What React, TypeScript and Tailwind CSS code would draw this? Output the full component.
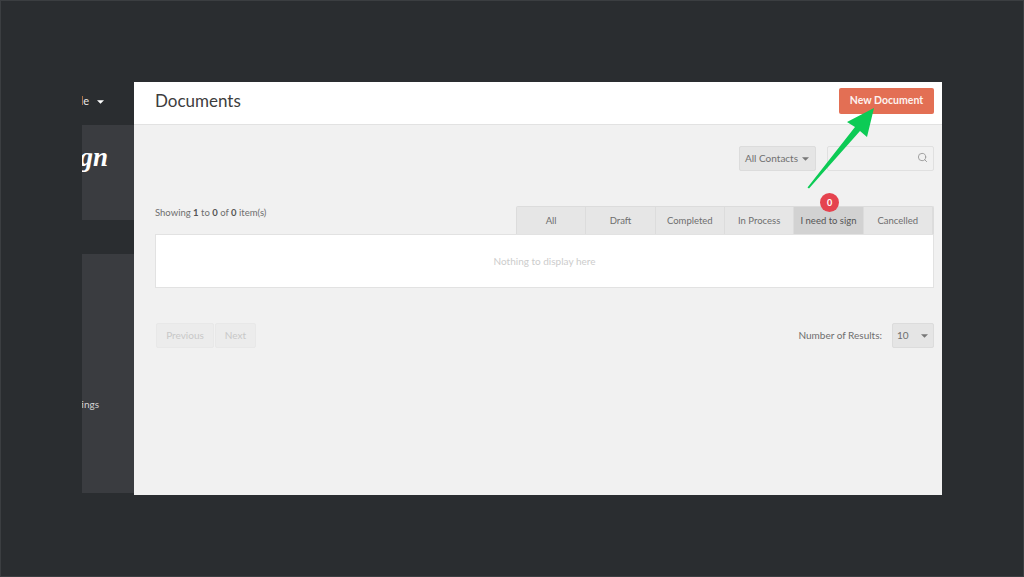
import { Search } from "lucide-react";

const tabs = ["All", "Draft", "Completed", "In Process", "I need to sign", "Cancelled"];

function Caret({ className }: { className: string }) {
  return (
    <svg width="7" height="4" viewBox="0 0 8 4" className={className}>
      <path d="M0 0h8L4 4z" fill="currentColor" />
    </svg>
  );
}

function Sidebar() {
  return (
    <aside className="w-[52px] h-[411px] shrink-0 overflow-hidden flex flex-col text-white">
      <div className="h-[43px] pb-[4px] flex items-center justify-end pr-[30px] text-[11px]">
        <span className="shrink-0 whitespace-nowrap text-[#e8e8e8]">Profile</span>
        <Caret className="ml-[8px] shrink-0 text-white" />
      </div>
      <div className="h-[95px] bg-[#3a3c40] flex justify-end pr-[26px] pt-[15px]">
        <span className="shrink-0 text-[27px] leading-[34px] font-bold italic font-['Liberation_Serif',serif]">
          Sign
        </span>
      </div>
      <div className="h-[34px]" />
      <div className="h-[239px] bg-[#3a3c40] flex justify-end pr-[35px] pt-[143px]">
        <span className="shrink-0 text-[10px] leading-[14px] text-[#d4d4d4]">Settings</span>
      </div>
    </aside>
  );
}

function Tabs() {
  return (
    <div className="relative w-[418px] h-[28px] flex bg-[#e6e6e6] border border-b-0 border-[#dcdcdc] rounded-t-[2px]">
      {tabs.map(tab => (
        <div
          key={tab}
          className={`flex-1 flex items-center justify-center pt-px text-[9.5px] border-r border-[#dcdcdc] last:border-r-0 whitespace-nowrap ${
            tab === "I need to sign" ? "bg-[#d2d2d2] text-[#555]" : "text-[#6e6e6e]"
          }`}
        >
          {tab}
        </div>
      ))}
      <span className="absolute left-[303px] top-[-14px] w-[19px] h-[19px] rounded-full bg-[#e5434f] text-white text-[9px] font-bold flex items-center justify-center">
        0
      </span>
    </div>
  );
}

export default function App() {
  return (
    <div className="relative w-[1024px] h-[577px] overflow-hidden bg-[#2a2d30] border border-[#3b3e41] pt-[81px] pl-[81px] font-['Lato',sans-serif]">
      <div className="flex">
        <Sidebar />
        <main className="w-[808px] h-[413px] bg-[#f1f1f1] flex flex-col">
          <header className="h-[43px] shrink-0 bg-white border-b border-[#e2e2e2] pb-[5px] flex items-center justify-between pl-[21px] pr-[8px]">
            <h1 className="text-[17px] font-normal text-[#3d3d3d]">Documents</h1>
            <button className="w-[95px] h-[26px] rounded-[2px] bg-[#e36f54] text-[#fdf3f0] text-[10.5px] font-bold">
              New Document
            </button>
          </header>

          <div className="pl-[21px] pr-[8px]">
            <div className="mt-[21px] flex justify-end gap-[11px]">
              <div className="w-[77px] h-[25px] bg-[#e5e5e5] border border-[#dcdcdc] rounded-[2px] flex items-center justify-between pl-[5px] pr-[6px] text-[10px] text-[#707070]">
                All Contacts
                <Caret className="text-[#777]" />
              </div>
              <div className="w-[107px] h-[25px] border border-[#e0e0e0] rounded-[2px] flex items-center justify-end pr-[5px] pb-[2px]">
                <Search size={11} className="text-[#999]" />
              </div>
            </div>

            <div className="mt-[35px] flex items-end justify-between">
              <p className="mb-[15px] text-[9.5px] leading-[13px] text-[#6e6e6e]">
                Showing <b className="text-[#555]">1</b> to <b className="text-[#555]">0</b> of{" "}
                <b className="text-[#555]">0</b> item(s)
              </p>
              <Tabs />
            </div>

            <div className="h-[54px] bg-white border border-[#e2e2e2] flex items-center justify-center text-[10px] text-[#cccccc]">
              Nothing to display here
            </div>

            <div className="mt-[35px] flex justify-between">
              <div className="flex gap-px pl-px text-[10px] text-[#c8c8c8]">
                <div className="w-[58px] h-[25px] bg-[#ececec] border border-[#e8e8e8] rounded-[2px] flex items-center justify-center">
                  Previous
                </div>
                <div className="w-[41px] h-[25px] bg-[#ececec] border border-[#e8e8e8] rounded-[2px] flex items-center justify-center">
                  Next
                </div>
              </div>
              <div className="flex items-center gap-[10px] text-[10px] text-[#6e6e6e]">
                <span>Number of Results:</span>
                <div className="w-[42px] h-[25px] bg-[#e5e5e5] border border-[#dcdcdc] rounded-[2px] flex items-center justify-between pl-[4px] pr-[5px]">
                  10
                  <Caret className="text-[#777]" />
                </div>
              </div>
            </div>
          </div>
        </main>
      </div>

      {/* annotation arrow drawn over the screenshot */}
      <svg className="absolute left-[-1px] top-[-1px] pointer-events-none" width="1024" height="577" viewBox="0 0 1024 577">
        <polygon points="807.5,187.5 855,127 847,122 874,108 867,137 860,131 809,188.5" fill="#0ccb55" />
      </svg>
    </div>
  );
}
